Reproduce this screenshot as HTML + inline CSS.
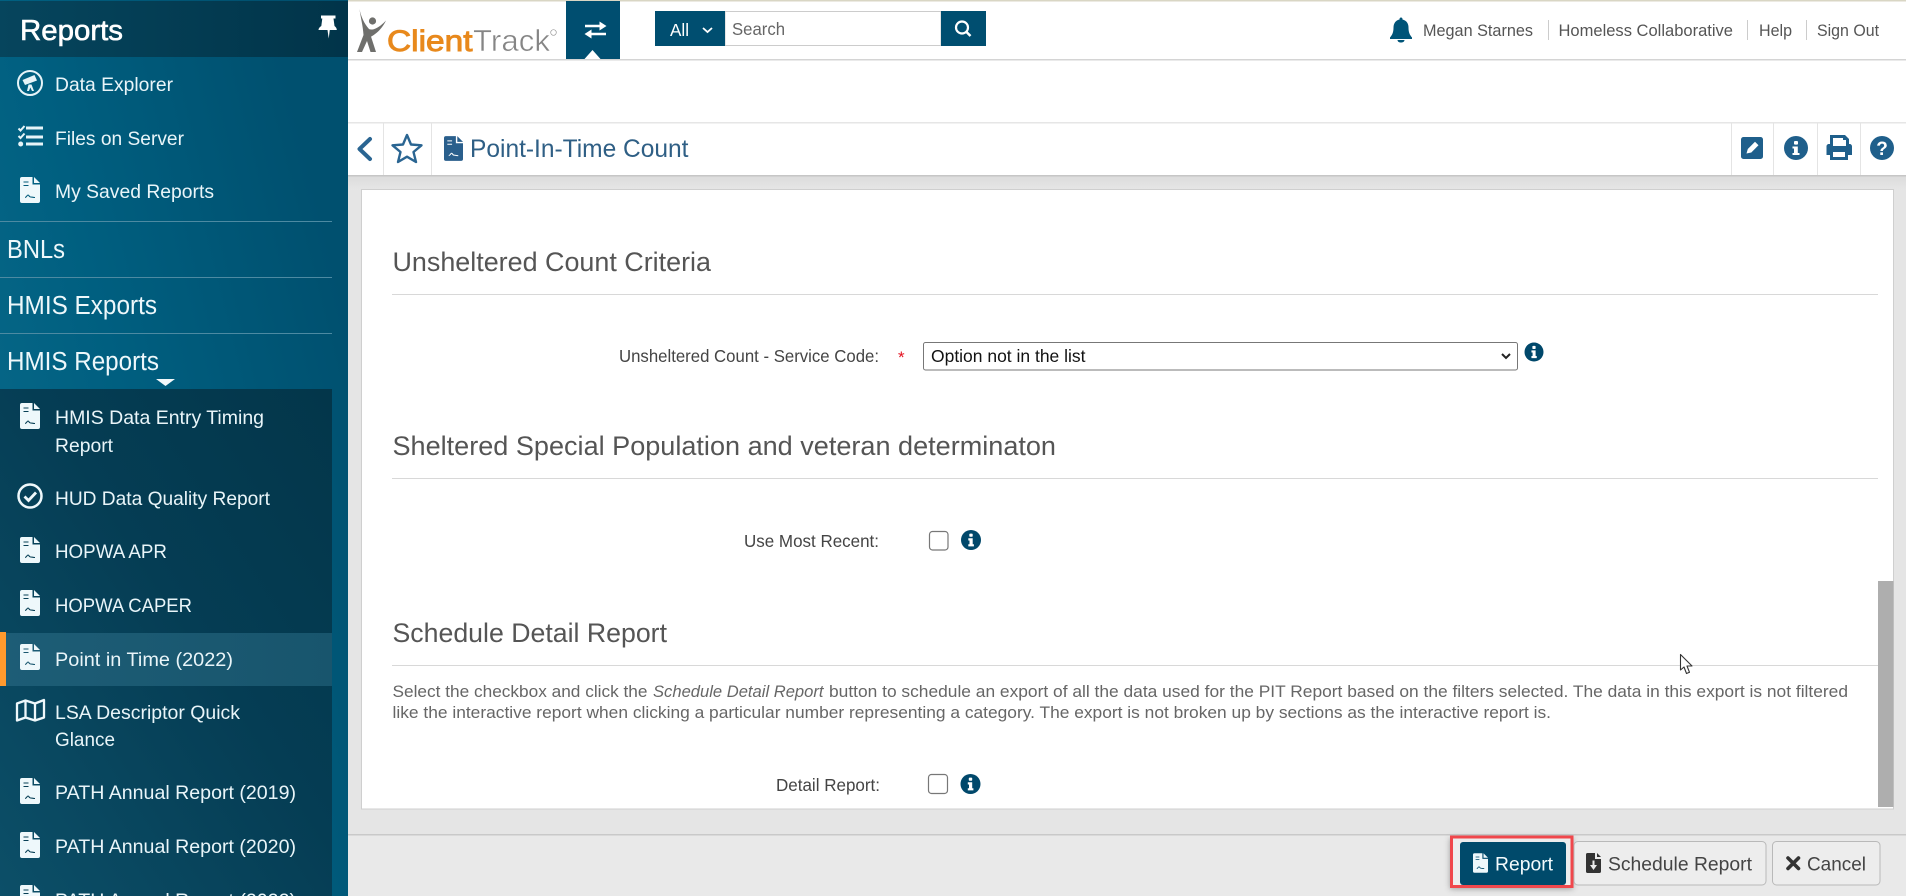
<!DOCTYPE html>
<html lang="en">
<head>
<meta charset="utf-8">
<title>Point-In-Time Count</title>
<style>
html,body{margin:0;padding:0;width:1906px;height:896px;overflow:hidden;background:#fff}
svg{display:block;font-family:"Liberation Sans",Arial,sans-serif}
.s{font-size:19.5px;fill:#e9f5f9}
.g{font-size:25.5px;fill:#eef8fb}
.h{font-size:26.5px;fill:#555}
.l{font-size:17.5px;fill:#444}
.t{font-size:17px;fill:#555}
.p{font-size:16.5px;fill:#666}
.b{font-size:19.5px;fill:#444}
</style>
</head>
<body>
<svg width="1906" height="896" viewBox="0 0 1906 896" xmlns="http://www.w3.org/2000/svg">
<defs>
<linearGradient id="side" x1="0" y1="1" x2="1" y2="0.35"><stop offset="0" stop-color="#0b6c8c"/><stop offset="0.5" stop-color="#005f80"/><stop offset="1" stop-color="#00506f"/></linearGradient>
<linearGradient id="head" x1="0" y1="0" x2="1" y2="0"><stop offset="0" stop-color="#06455d"/><stop offset="1" stop-color="#013449"/></linearGradient>
<linearGradient id="sub" x1="0" y1="1" x2="1" y2="0"><stop offset="0" stop-color="#0c4f68"/><stop offset="0.55" stop-color="#053d54"/><stop offset="1" stop-color="#03364a"/></linearGradient>
<linearGradient id="hl" x1="0" y1="0" x2="1" y2="0"><stop offset="0" stop-color="#1d5d76"/><stop offset="1" stop-color="#18556d"/></linearGradient>
<linearGradient id="bar" x1="0" y1="0" x2="0" y2="1"><stop offset="0" stop-color="#dcdcdc"/><stop offset="1" stop-color="#e6e6e6"/></linearGradient>
<filter id="sh" x="-20%" y="-30%" width="140%" height="160%"><feGaussianBlur stdDeviation="3"/></filter>
<symbol id="doc" viewBox="0 0 20 26" overflow="visible">
<path fill="currentColor" d="M2 0H12.500V7.500H20V24a2 2 0 0 1-2 2H2a2 2 0 0 1-2-2V2A2 2 0 0 1 2 0Z"/>
<path fill="currentColor" d="M14 0L20 6H14Z"/>
<path fill="none" stroke="var(--d)" stroke-width="1.100" d="M3.500 5H8.500M3.500 8.500H8.500M5 20.500C6.500 20.500 7 18 8 18S9 20 10.500 20C12 20 13 20.500 15 20.500"/>
</symbol>
<symbol id="info" viewBox="0 0 20 20"><circle cx="10" cy="10" r="10" fill="currentColor"/><rect x="8.300" y="3.600" width="3.400" height="3.200" rx=".8" fill="#fff"/><path fill="#fff" d="M7.300 8.300H11.700V14.200H12.900V16.400H7.300V14.200H8.500V10.500H7.300Z"/></symbol>
</defs>

<rect width="1906" height="896" fill="#fff"/>
<rect width="1906" height="1.500" fill="#d9d6c4"/>

<!-- sidebar -->
<rect x="0" y="0" width="348" height="896" fill="url(#side)"/>
<rect x="0" y="1" width="348" height="56" fill="url(#head)"/>
<text x="20" y="40" font-size="29" fill="#fff" stroke="#fff" stroke-width=".6" textLength="103" lengthAdjust="spacingAndGlyphs">Reports</text>
<path fill="#fff" d="M321 15.500H335.500V18.500H333.500L334.500 26C336 27 336.800 28.500 336.800 30H329.800L328.700 38.500L327.500 30H318.500C318.500 28.500 319.500 27 321.300 26L322.300 18.500H321Z"/>

<circle cx="30" cy="83" r="12" fill="none" stroke="#e6f4f8" stroke-width="2"/>
<path fill="#e6f4f8" d="M22.500 80L34.500 75L37 80.500L25 85ZM28.500 84.500H31.500L34 91H32L30.300 87.500L29 91H27Z"/>
<text class="s" x="55" y="91" textLength="118" lengthAdjust="spacingAndGlyphs">Data Explorer</text>

<path d="M26 128H43M26 137H43M26 144H43" fill="none" stroke="#e6f4f8" stroke-width="3"/>
<path d="M18.500 128.500L20.500 130.500L24.500 126M18.500 136L20.500 138L24.500 133.500" fill="none" stroke="#e6f4f8" stroke-width="2"/>
<circle cx="20.700" cy="144" r="2.500" fill="#e6f4f8"/>
<text class="s" x="55" y="145" textLength="129" lengthAdjust="spacingAndGlyphs">Files on Server</text>

<use href="#doc" x="20" y="177" width="20" height="26" style="color:#eef8fb;--d:#035a7a"/>
<text class="s" x="55" y="198" textLength="159" lengthAdjust="spacingAndGlyphs">My Saved Reports</text>

<rect x="0" y="221" width="332" height="1" fill="#4d8aa2"/>
<text class="g" x="7" y="258" textLength="58" lengthAdjust="spacingAndGlyphs">BNLs</text>
<rect x="0" y="277" width="332" height="1" fill="#4d8aa2"/>
<text class="g" x="7" y="314" textLength="150" lengthAdjust="spacingAndGlyphs">HMIS Exports</text>
<rect x="0" y="333" width="332" height="1" fill="#4d8aa2"/>
<text class="g" x="7" y="370" textLength="152" lengthAdjust="spacingAndGlyphs">HMIS Reports</text>

<rect x="0" y="389" width="332" height="507" fill="url(#sub)"/>
<path d="M156 379H175L165.500 386Z" fill="#f2f8fa"/>

<use href="#doc" x="20" y="403" width="20" height="26" style="color:#eef8fb;--d:#073f55"/>
<text class="s" x="55" y="424" textLength="209" lengthAdjust="spacingAndGlyphs">HMIS Data Entry Timing</text>
<text class="s" x="55" y="452" textLength="58" lengthAdjust="spacingAndGlyphs">Report</text>

<circle cx="30" cy="496" r="11.500" fill="none" stroke="#eef8fb" stroke-width="2.500"/>
<path d="M24.500 496.500L28.500 500.500L36 492.500" fill="none" stroke="#eef8fb" stroke-width="2.800"/>
<text class="s" x="55" y="505" textLength="215" lengthAdjust="spacingAndGlyphs">HUD Data Quality Report</text>

<use href="#doc" x="20" y="537" width="20" height="26" style="color:#eef8fb;--d:#073f55"/>
<text class="s" x="55" y="558" textLength="112" lengthAdjust="spacingAndGlyphs">HOPWA APR</text>

<use href="#doc" x="20" y="590" width="20" height="26" style="color:#eef8fb;--d:#073f55"/>
<text class="s" x="55" y="612" textLength="137" lengthAdjust="spacingAndGlyphs">HOPWA CAPER</text>

<rect x="0" y="633" width="332" height="53" fill="url(#hl)"/>
<rect x="0" y="632" width="6" height="54" fill="#ff9a2e"/>
<use href="#doc" x="20" y="644" width="20" height="26" style="color:#eef8fb;--d:#1a5870"/>
<text class="s" x="55" y="666" textLength="178" lengthAdjust="spacingAndGlyphs">Point in Time (2022)</text>

<path d="M17 703.500L25.500 700.500L35 703.500L44 700V717.500L35 720.500L25.500 717.500L17 720.500ZM25.500 700.500V717.500M35 703.500V720.500" fill="none" stroke="#eef8fb" stroke-width="2.300" stroke-linejoin="round"/>
<text class="s" x="55" y="719" textLength="185" lengthAdjust="spacingAndGlyphs">LSA Descriptor Quick</text>
<text class="s" x="55" y="746" textLength="60" lengthAdjust="spacingAndGlyphs">Glance</text>

<use href="#doc" x="20" y="778" width="20" height="26" style="color:#eef8fb;--d:#073f55"/>
<text class="s" x="55" y="799" textLength="241" lengthAdjust="spacingAndGlyphs">PATH Annual Report (2019)</text>
<use href="#doc" x="20" y="832" width="20" height="26" style="color:#eef8fb;--d:#073f55"/>
<text class="s" x="55" y="853" textLength="241" lengthAdjust="spacingAndGlyphs">PATH Annual Report (2020)</text>
<use href="#doc" x="20" y="885" width="20" height="26" style="color:#eef8fb;--d:#073f55"/>
<text class="s" x="55" y="907" textLength="241" lengthAdjust="spacingAndGlyphs">PATH Annual Report (2022)</text>

<!-- header -->
<rect x="348" y="59" width="1558" height="1.500" fill="#d4d4d4"/>
<g fill="#6f6f6c">
<path d="M359.500 9C361 17 364.500 24 369 29C370 31 370.500 33 370.500 35L376 52H370.500L367 41L362 52H357L363.500 35C363 26 360.500 17 359.500 9Z"/>
<path d="M369 29C373 31 380 27 386 20.500C382 29 376 34 370.500 37Z"/>
<circle cx="372.500" cy="21" r="3.600"/>
</g>
<text x="387" y="51" font-size="29.500" fill="#e8891c" stroke="#e8891c" stroke-width=".9" textLength="85.500" lengthAdjust="spacingAndGlyphs">Client</text>
<text x="473" y="51" font-size="31" fill="#858585" stroke="#fff" stroke-width=".5" paint-order="normal" textLength="77" lengthAdjust="spacingAndGlyphs">Track</text>
<circle cx="553.500" cy="32.500" r="2.800" fill="none" stroke="#999" stroke-width=".7"/>

<rect x="566" y="1" width="54" height="58" fill="#004e70"/>
<path d="M584.500 59L592.500 50L600.500 59Z" fill="#fff"/>
<path d="M585 26H600M591 34H606" stroke="#fff" stroke-width="2.400"/>
<path d="M599.500 21.500L606.500 26L599.500 30.500ZM591.500 29.500L584.500 34L591.500 38.500Z" fill="#fff"/>

<rect x="725" y="11.500" width="216" height="34" fill="#fff" stroke="#ccc"/>
<rect x="655" y="11" width="70" height="35" fill="#004e70"/>
<text x="670" y="36" font-size="17.500" fill="#fff" textLength="19" lengthAdjust="spacingAndGlyphs">All</text>
<path d="M703 28L707.500 32L712 28" fill="none" stroke="#fff" stroke-width="1.800"/>
<text x="732" y="35" font-size="17.500" fill="#666" textLength="53" lengthAdjust="spacingAndGlyphs">Search</text>
<rect x="941" y="11" width="45" height="35" fill="#004e70"/>
<circle cx="962" cy="27.500" r="6" fill="none" stroke="#fff" stroke-width="2.200"/>
<path d="M966.500 32L970.500 36" stroke="#fff" stroke-width="2.500"/>

<path fill="#005478" d="M1401 17.500C1402 17.500 1402.500 18 1402.500 19.500C1406.500 20.500 1408.500 23.500 1408.500 27.500C1408.500 33 1410 35 1412 37.500V39H1390V37.500C1392 35 1393.500 33 1393.500 27.500C1393.500 23.500 1395.500 20.500 1399.500 19.500C1399.500 18 1400 17.500 1401 17.500ZM1397.500 40H1404.500C1404.500 41.500 1403 42.500 1401 42.500S1397.500 41.500 1397.500 40Z"/>
<text class="t" x="1423" y="36" textLength="110" lengthAdjust="spacingAndGlyphs">Megan Starnes</text>
<rect x="1548" y="20" width="1" height="20" fill="#ccc"/>
<text class="t" x="1558.500" y="36" textLength="174.500" lengthAdjust="spacingAndGlyphs">Homeless Collaborative</text>
<rect x="1747" y="20" width="1" height="20" fill="#ccc"/>
<text class="t" x="1759" y="36" textLength="33" lengthAdjust="spacingAndGlyphs">Help</text>
<rect x="1806" y="20" width="1" height="20" fill="#ccc"/>
<text class="t" x="1817" y="36" textLength="62" lengthAdjust="spacingAndGlyphs">Sign Out</text>

<!-- toolbar -->
<rect x="348" y="122" width="1558" height="1.500" fill="#e6e6e6"/>
<rect x="348" y="175" width="1558" height="1.500" fill="#c6c6c6"/>
<g fill="#e4e4e4">
<rect x="383" y="123" width="1" height="52"/><rect x="431" y="123" width="1" height="52"/>
<rect x="1731" y="123" width="1" height="52"/><rect x="1773" y="123" width="1" height="52"/><rect x="1817" y="123" width="1" height="52"/><rect x="1860" y="123" width="1" height="52"/>
</g>
<path d="M370 139L359.500 149L370 159" fill="none" stroke="#2a6592" stroke-width="4" stroke-linecap="round" stroke-linejoin="round"/>
<path d="M407 135L411 144.500L421.500 145.300L413.500 152L416 162L407 156.700L398 162L400.500 152L392.500 145.300L403 144.500Z" fill="none" stroke="#2a6592" stroke-width="2.400" stroke-linejoin="round"/>
<use href="#doc" x="444" y="136" width="19" height="25" style="color:#2a5f8c;--d:#fff"/>
<text x="470" y="157" font-size="25" fill="#2f5f85" textLength="218.500" lengthAdjust="spacingAndGlyphs">Point-In-Time Count</text>

<rect x="1741" y="137" width="22" height="22" rx="2.500" fill="#1f5f8b"/>
<path d="M1746.500 153.500L1747.800 149L1755 141.800L1758.500 145.300L1751.300 152.500Z" fill="#fff"/>
<circle cx="1796" cy="148" r="12" fill="#1f5f8b"/>
<rect x="1794" y="141" width="4" height="3.600" rx="1" fill="#fff"/>
<path d="M1792.500 146.500H1797.800V153H1799.500V155H1792.500V153H1794V148.500H1792.500Z" fill="#fff"/>
<path fill="#1f5f8b" fill-rule="evenodd" d="M1830 135H1845L1849 139V144H1849.500C1851 144 1852 145 1852 146.500V155H1848V160H1830V155H1826.500V146.500C1826.500 145 1827.500 144 1829 144H1830ZM1833 138V146H1846V140H1843V138ZM1833 152V157H1845V152Z"/>
<circle cx="1882" cy="148" r="12" fill="#1f5f8b"/>
<text x="1882" y="155" font-size="19" font-weight="700" fill="#fff" text-anchor="middle">?</text>

<!-- main background -->
<rect x="348" y="176.500" width="1558" height="720" fill="#e5e5e5"/>
<rect x="348" y="176.500" width="1558" height="13" fill="url(#bar)"/>
<rect x="361.500" y="189.500" width="1532" height="619.500" fill="#fff" stroke="#cfcfcf"/>
<rect x="1878" y="581" width="15.500" height="226" fill="#aeaeae"/>

<text class="h" x="392.500" y="271" textLength="318.500" lengthAdjust="spacingAndGlyphs">Unsheltered Count Criteria</text>
<rect x="392" y="294" width="1486" height="1" fill="#d8d8d8"/>

<text class="l" x="619" y="362" textLength="260" lengthAdjust="spacingAndGlyphs">Unsheltered Count - Service Code:</text>
<text x="898" y="363" font-size="17" fill="#e3101f">*</text>
<rect x="923.500" y="342.500" width="594" height="27.500" rx="2" fill="#fff" stroke="#777"/>
<text x="931" y="362" font-size="17.500" fill="#111" textLength="154.500" lengthAdjust="spacingAndGlyphs">Option not in the list</text>
<path d="M1502 354L1506 358L1510 354" fill="none" stroke="#222" stroke-width="2"/>
<use href="#info" x="1524.500" y="342.500" width="19" height="19" style="color:#00486b"/>

<text class="h" x="392.500" y="455" textLength="663.500" lengthAdjust="spacingAndGlyphs">Sheltered Special Population and veteran determinaton</text>
<rect x="392" y="478" width="1486" height="1" fill="#d8d8d8"/>

<text class="l" x="744" y="547" textLength="135" lengthAdjust="spacingAndGlyphs">Use Most Recent:</text>
<rect x="929.500" y="531.500" width="18.500" height="18.500" rx="3" fill="#fff" stroke="#777" stroke-width="1.200"/>
<use href="#info" x="961" y="530" width="20" height="20" style="color:#00486b"/>

<text class="h" x="392.500" y="642" textLength="274.500" lengthAdjust="spacingAndGlyphs">Schedule Detail Report</text>
<rect x="392" y="665" width="1486" height="1" fill="#d8d8d8"/>

<text class="p" x="392.500" y="697" textLength="255" lengthAdjust="spacingAndGlyphs">Select the checkbox and click the</text>
<text class="p" x="653" y="697" font-style="italic" textLength="170.500" lengthAdjust="spacingAndGlyphs">Schedule Detail Report</text>
<text class="p" x="829" y="697" textLength="1019" lengthAdjust="spacingAndGlyphs">button to schedule an export of all the data used for the PIT Report based on the filters selected. The data in this export is not filtered</text>
<text class="p" x="392.500" y="718" textLength="1158.500" lengthAdjust="spacingAndGlyphs">like the interactive report when clicking a particular number representing a category. The export is not broken up by sections as the interactive report is.</text>

<text class="l" x="776" y="791" textLength="104" lengthAdjust="spacingAndGlyphs">Detail Report:</text>
<rect x="928.500" y="774.500" width="19" height="19" rx="3" fill="#fff" stroke="#777" stroke-width="1.200"/>
<use href="#info" x="960.500" y="774" width="20" height="20" style="color:#00486b"/>

<path d="M1680.500 654.500V670L1684 667L1686.500 673.500L1689.500 672.300L1687 666H1692Z" fill="#fff" stroke="#333" stroke-width="1.100" stroke-linejoin="round"/>

<!-- footer -->
<rect x="348" y="834" width="1558" height="1.500" fill="#c9c9c9"/>
<rect x="348" y="835.500" width="1558" height="61" fill="#e9e9e9"/>

<rect x="1450" y="838" width="123" height="51" fill="#555" opacity=".5" filter="url(#sh)"/>
<rect x="1574" y="841.500" width="192" height="43.500" rx="4" fill="#ededed" stroke="#b9b9b9"/>
<rect x="1772.500" y="841.500" width="107.500" height="43.500" rx="4" fill="#ededed" stroke="#b9b9b9"/>
<rect x="1451.500" y="837" width="120.500" height="49.500" fill="#ededed" stroke="#f0474c" stroke-width="3"/>
<rect x="1460" y="842" width="106" height="43" rx="3" fill="#004a6b"/>
<use href="#doc" x="1473" y="853" width="15" height="20" style="color:#eef8fb;--d:#004a6b"/>
<text class="b" x="1495" y="870.500" style="fill:#f4fbfd" textLength="58" lengthAdjust="spacingAndGlyphs">Report</text>

<path fill="#333" d="M1587.500 853H1595V859H1601V871.500C1601 872.500 1600.300 873 1599.500 873H1587.500C1586.700 873 1586 872.500 1586 871.500V854.500C1586 853.500 1586.700 853 1587.500 853ZM1597 853L1601 857H1597Z"/>
<path fill="#ededed" d="M1592.500 860.500H1594.500V865H1597L1593.500 870L1590 865H1592.500Z"/>
<text class="b" x="1608" y="870.500" textLength="144" lengthAdjust="spacingAndGlyphs">Schedule Report</text>
<path d="M1788 858L1798.500 868.500M1798.500 858L1788 868.500" stroke="#333" stroke-width="3.600" stroke-linecap="round"/>
<text class="b" x="1807" y="870.500" textLength="59" lengthAdjust="spacingAndGlyphs">Cancel</text>
</svg>
</body>
</html>
